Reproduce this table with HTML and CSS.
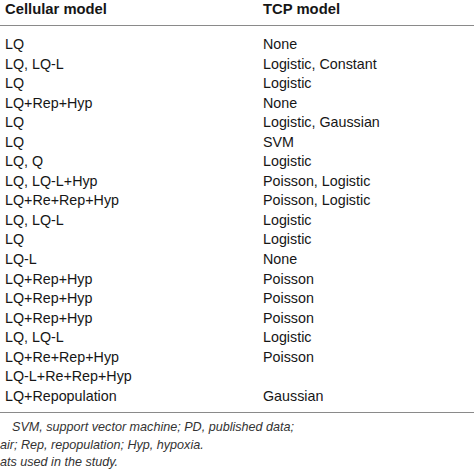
FILE: index.html
```html
<!DOCTYPE html>
<html>
<head>
<meta charset="utf-8">
<link rel="stylesheet" href="styles.css">
</head>
<body>
<div class="page">
  <div class="head row">
    <div class="c1">Cellular model</div>
    <div class="c2">TCP model</div>
  </div>
  <div class="body">
    <div class="row"><div class="c1">LQ</div><div class="c2">None</div></div>
    <div class="row"><div class="c1">LQ, LQ-L</div><div class="c2">Logistic, Constant</div></div>
    <div class="row"><div class="c1">LQ</div><div class="c2">Logistic</div></div>
    <div class="row"><div class="c1">LQ+Rep+Hyp</div><div class="c2">None</div></div>
    <div class="row"><div class="c1">LQ</div><div class="c2">Logistic, Gaussian</div></div>
    <div class="row"><div class="c1">LQ</div><div class="c2">SVM</div></div>
    <div class="row"><div class="c1">LQ, Q</div><div class="c2">Logistic</div></div>
    <div class="row"><div class="c1">LQ, LQ-L+Hyp</div><div class="c2">Poisson, Logistic</div></div>
    <div class="row"><div class="c1">LQ+Re+Rep+Hyp</div><div class="c2">Poisson, Logistic</div></div>
    <div class="row"><div class="c1">LQ, LQ-L</div><div class="c2">Logistic</div></div>
    <div class="row"><div class="c1">LQ</div><div class="c2">Logistic</div></div>
    <div class="row"><div class="c1">LQ-L</div><div class="c2">None</div></div>
    <div class="row"><div class="c1">LQ+Rep+Hyp</div><div class="c2">Poisson</div></div>
    <div class="row"><div class="c1">LQ+Rep+Hyp</div><div class="c2">Poisson</div></div>
    <div class="row"><div class="c1">LQ+Rep+Hyp</div><div class="c2">Poisson</div></div>
    <div class="row"><div class="c1">LQ, LQ-L</div><div class="c2">Logistic</div></div>
    <div class="row"><div class="c1">LQ+Re+Rep+Hyp</div><div class="c2">Poisson</div></div>
    <div class="row"><div class="c1">LQ-L+Re+Rep+Hyp</div><div class="c2"></div></div>
    <div class="row"><div class="c1">LQ+Repopulation</div><div class="c2">Gaussian</div></div>
  </div>
  <div class="notes">
    <div class="note n1">SVM, support vector machine; PD, published data;</div>
    <div class="note">air; Rep, repopulation; Hyp, hypoxia.</div>
    <div class="note">ats used in the study.</div>
  </div>
</div>
</body>
</html>
```
FILE: styles.css
```css
html, body {
  margin: 0;
  padding: 0;
  background: #ffffff;
}
.page {
  width: 474px;
  height: 474px;
  overflow: hidden;
  font-family: "Liberation Sans", Arial, sans-serif;
  font-size: 14.3px;
  color: #161616;
}
.row {
  display: grid;
  grid-template-columns: 263px 1fr;
  line-height: 19.56px;
  height: 19.56px;
  white-space: nowrap;
}
.c1 {
  padding-left: 5px;
}
.head {
  font-weight: bold;
  font-size: 14.8px;
  height: 25px;
  border-bottom: 1.3px solid #8a8a8a;
  line-height: 19px;
}
.body {
  padding-top: 9px;
  padding-bottom: 6px;
  border-bottom: 1.3px solid #8a8a8a;
}
.notes {
  padding-top: 6px;
  font-size: 12.6px;
  font-style: italic;
  color: #333333;
}
.note {
  line-height: 17.5px;
  white-space: nowrap;
}
.n1 {
  padding-left: 12px;
}
```
